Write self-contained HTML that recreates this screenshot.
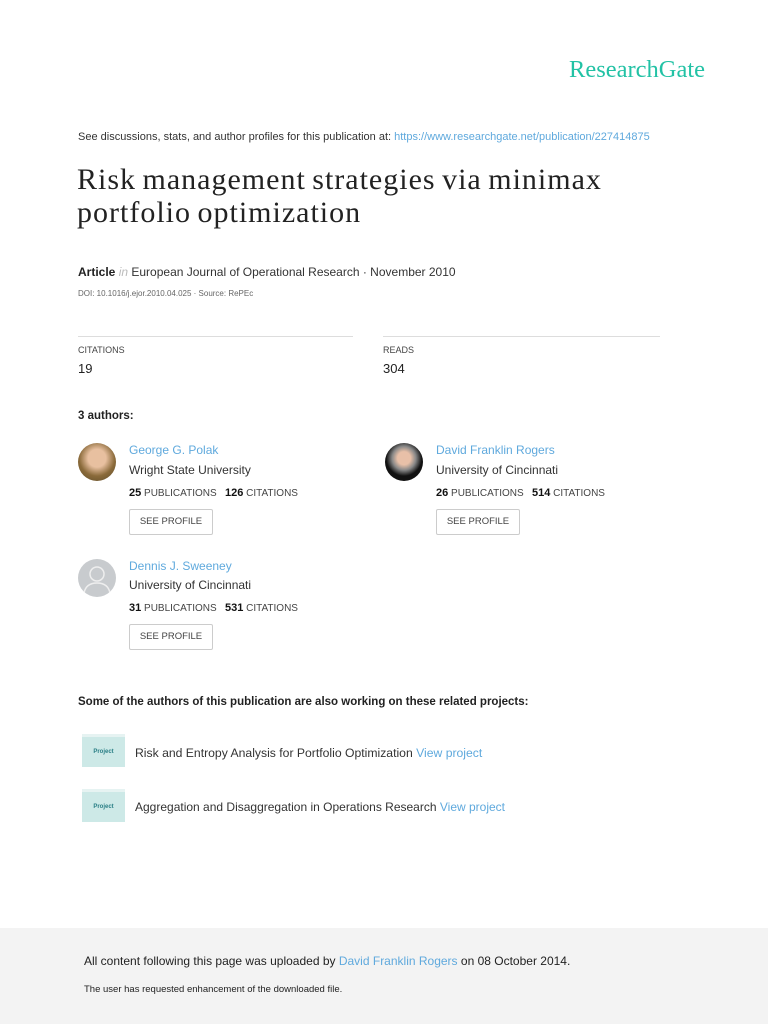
<!DOCTYPE html>
<html><head><meta charset="utf-8"><style>
*{margin:0;padding:0;box-sizing:border-box}
body{width:768px;height:1024px;position:relative;background:#fff;font-family:"Liberation Sans",sans-serif;color:#333;overflow:hidden}
.a{position:absolute;white-space:nowrap}
.b{color:#5fa9dd}
.sm{font-size:10px;color:#444}
.sm b{color:#111;font-size:11px}
.btn{position:absolute;width:84px;height:26px;border:1px solid #ccc;border-radius:2px;font-size:9.5px;color:#444;text-align:center;line-height:24px}
.av{position:absolute;width:38px;height:38px;border-radius:50%}
.proj{position:absolute;width:43px;height:33px;background:#cde9e7;border-top:3px solid #e6f3f2;font-size:6px;color:#2a7f86;font-weight:bold;text-align:center;line-height:30px}
</style></head><body>
<div class="a" style="left:569px;top:56px;font-family:'Liberation Serif',serif;font-size:24.5px;color:#22c2a5">ResearchGate</div>
<div class="a" style="left:78px;top:131px;font-size:11px;color:#333">See discussions, stats, and author profiles for this publication at: <span class="b">https://www.researchgate.net/publication/227414875</span></div>
<div class="a" style="left:77px;top:163px;font-family:'Liberation Serif',serif;font-size:30px;letter-spacing:1px;word-spacing:-2px;line-height:33px;color:#222;white-space:normal;width:660px">Risk management strategies via minimax<br>portfolio optimization</div>
<div class="a" style="left:78px;top:265px;font-size:12px"><b style="color:#222">Article</b> <i style="color:#bbb">in</i> European Journal of Operational Research · November 2010</div>
<div class="a" style="left:78px;top:289px;font-size:8px;color:#666">DOI: 10.1016/j.ejor.2010.04.025 · Source: RePEc</div>
<div class="a" style="left:78px;top:336px;width:275px;border-top:1px solid #ddd"></div>
<div class="a" style="left:383px;top:336px;width:277px;border-top:1px solid #ddd"></div>
<div class="a" style="left:78px;top:345px;font-size:9px;color:#444">CITATIONS</div>
<div class="a" style="left:383px;top:345px;font-size:9px;color:#444">READS</div>
<div class="a" style="left:78px;top:361px;font-size:13px;color:#222">19</div>
<div class="a" style="left:383px;top:361px;font-size:13px;color:#222">304</div>
<div class="a" style="left:78px;top:410px;font-size:11.5px;font-weight:bold;color:#222">3 authors:</div>

<div class="av" style="left:78px;top:443px;background:radial-gradient(circle at 50% 40%,#e8c0a0 0 30%,#8a6a3a 60%,#5a4a2a)"></div>
<div class="a b" style="left:129px;top:443px;font-size:12px">George G. Polak</div>
<div class="a" style="left:129px;top:463px;font-size:12px">Wright State University</div>
<div class="a sm" style="left:129px;top:487px"><b>25</b> PUBLICATIONS &nbsp; <b>126</b> CITATIONS</div>
<div class="btn" style="left:129px;top:509px">SEE PROFILE</div>

<div class="av" style="left:385px;top:443px;background:radial-gradient(circle at 50% 40%,#e8c0a8 0 22%,#888 40%,#111 60%)"></div>
<div class="a b" style="left:436px;top:443px;font-size:12px">David Franklin Rogers</div>
<div class="a" style="left:436px;top:463px;font-size:12px">University of Cincinnati</div>
<div class="a sm" style="left:436px;top:487px"><b>26</b> PUBLICATIONS &nbsp; <b>514</b> CITATIONS</div>
<div class="btn" style="left:436px;top:509px">SEE PROFILE</div>

<div class="av" style="left:78px;top:559px;background:#c8cbce;overflow:hidden"><svg width="38" height="38"><circle cx="19" cy="15" r="7" fill="none" stroke="#eee" stroke-width="1.5"/><path d="M6 34 Q8 24 19 24 Q30 24 32 34" fill="none" stroke="#eee" stroke-width="1.5"/></svg></div>
<div class="a b" style="left:129px;top:559px;font-size:12px">Dennis J. Sweeney</div>
<div class="a" style="left:129px;top:578px;font-size:12px">University of Cincinnati</div>
<div class="a sm" style="left:129px;top:602px"><b>31</b> PUBLICATIONS &nbsp; <b>531</b> CITATIONS</div>
<div class="btn" style="left:129px;top:624px">SEE PROFILE</div>

<div class="a" style="left:78px;top:696px;font-size:11.5px;font-weight:bold;color:#222">Some of the authors of this publication are also working on these related projects:</div>
<div class="proj" style="left:82px;top:734px">Project</div>
<div class="a" style="left:135px;top:746px;font-size:12.2px">Risk and Entropy Analysis for Portfolio Optimization <span class="b">View project</span></div>
<div class="proj" style="left:82px;top:789px">Project</div>
<div class="a" style="left:135px;top:800px;font-size:12px">Aggregation and Disaggregation in Operations Research <span class="b">View project</span></div>

<div class="a" style="left:0;top:928px;width:768px;height:96px;background:#f3f3f3"></div>
<div class="a" style="left:84px;top:954px;font-size:12px;color:#222">All content following this page was uploaded by <span class="b">David Franklin Rogers</span> on 08 October 2014.</div>
<div class="a" style="left:84px;top:984px;font-size:9.5px;color:#222">The user has requested enhancement of the downloaded file.</div>
</body></html>
